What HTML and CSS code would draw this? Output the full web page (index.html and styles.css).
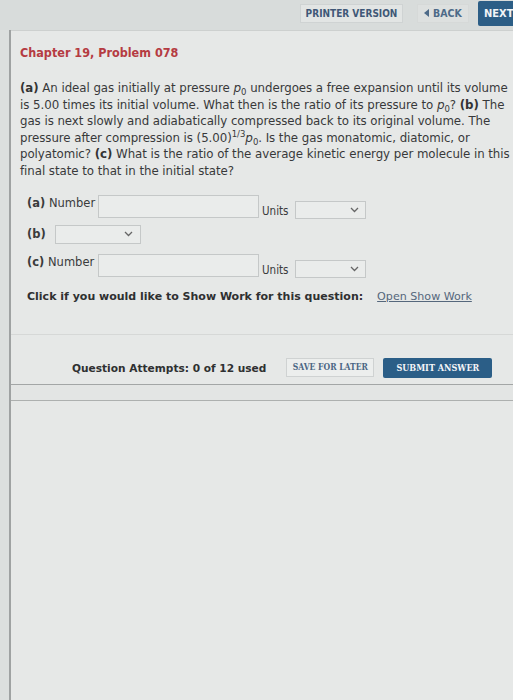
FILE: index.html
```html
<!DOCTYPE html>
<html lang="en">
<head>
<meta charset="utf-8">
<title>Chapter 19, Problem 078</title>
<link rel="stylesheet" href="styles.css">
</head>
<body>
<div class="topbar">
  <span class="btn btn-print">PRINTER VERSION</span>
  <span class="btn btn-back"><svg class="tri" viewBox="0 0 5 8" width="5" height="8"><path d="M5 0 L0 4 L5 8 Z" fill="#4d6a88"/></svg>BACK</span>
  <span class="btn btn-next">NEXT</span>
</div>
<div class="page">
  <div class="panel">
    <h1 class="title">Chapter 19, Problem 078</h1>
    <p class="question"><b>(a)</b> An ideal gas initially at pressure <i>p</i><sub>0</sub> undergoes a free expansion until its volume<br>is 5.00 times its initial volume. What then is the ratio of its pressure to <i>p</i><sub>0</sub>? <b>(b)</b> The<br>gas is next slowly and adiabatically compressed back to its original volume. The<br>pressure after compression is (5.00)<sup>1/3</sup><i>p</i><sub>0</sub>. Is the gas monatomic, diatomic, or<br>polyatomic? <b>(c)</b> What is the ratio of the average kinetic energy per molecule in this<br>final state to that in the initial state?</p>
    <div class="form">
      <div class="row">
        <span class="label"><b>(a)</b> Number</span>
        <span class="input"></span>
        <span class="units">Units</span>
        <span class="select"><svg viewBox="0 0 9 6" width="9" height="6"><path d="M1 1 L4.5 4.5 L8 1" fill="none" stroke="#666" stroke-width="1.3"/></svg></span>
      </div>
      <div class="row row-b">
        <span class="label"><b>(b)</b></span>
        <span class="select select-b"><svg viewBox="0 0 9 6" width="9" height="6"><path d="M1 1 L4.5 4.5 L8 1" fill="none" stroke="#666" stroke-width="1.3"/></svg></span>
      </div>
      <div class="row">
        <span class="label"><b>(c)</b> Number</span>
        <span class="input"></span>
        <span class="units">Units</span>
        <span class="select"><svg viewBox="0 0 9 6" width="9" height="6"><path d="M1 1 L4.5 4.5 L8 1" fill="none" stroke="#666" stroke-width="1.3"/></svg></span>
      </div>
    </div>
    <div class="showwork">
      <span class="sw-label">Click if you would like to Show Work for this question:</span>
      <a class="sw-link" href="#">Open Show Work</a>
    </div>
  </div>
  <div class="footer">
    <span class="attempts">Question Attempts: 0 of 12 used</span>
    <span class="btn-save">SAVE FOR LATER</span>
    <span class="btn-submit">SUBMIT ANSWER</span>
  </div>
  <div class="gap-strip"></div>
  <div class="blank"></div>
</div>
</body>
</html>
```

FILE: styles.css
```css
html, body {
  margin: 0;
  padding: 0;
  height: 100%;
  overflow: hidden;
}
body {
  background: #dcdfde;
  font-family: "DejaVu Sans", sans-serif;
  color: #3a3b3c;
  display: flex;
  flex-direction: column;
}
.topbar {
  height: 30px;
  flex-shrink: 0;
  display: flex;
  align-items: center;
  padding-left: 300px;
  white-space: nowrap;
  overflow: hidden;
  background: #d8dcdb;
}
.btn {
  display: inline-flex;
  align-items: center;
  justify-content: center;
  box-sizing: border-box;
  flex-shrink: 0;
  font-family: "DejaVu Sans Condensed", "DejaVu Sans", sans-serif;
  font-weight: bold;
  font-size: 10px;
}
.btn-print {
  width: 103px;
  height: 19px;
  margin-top: -4px;
  background: #e2e5e4;
  border: 1px solid #cfd3d3;
  color: #3f5877;
}
.btn-back {
  width: 52px;
  height: 19px;
  margin-left: 14px;
  margin-top: -4px;
  background: #dde0df;
  border: 1px solid #d6d9d8;
  color: #4d6a88;
  gap: 4px;
  font-size: 10.5px;
}
.btn-next {
  width: 35px;
  height: 25px;
  margin-left: 9px;
  margin-top: -3px;
  background: #2c5e86;
  color: #f2f4f6;
  font-size: 11px;
  border-radius: 2px 0 0 2px;
  justify-content: flex-start;
  padding-left: 6px;
}
.page {
  flex: 1;
  min-height: 0;
  margin-left: 9px;
  border-left: 2px solid #9fa2a2;
  background: #e6e8e7;
  display: flex;
  flex-direction: column;
}
.panel {
  border-top: 1px solid #cdd0cf;
  padding: 13px 0 0 9px;
  height: 305px;
  flex-shrink: 0;
  box-sizing: border-box;
  border-bottom: 1px solid #d6d8d7;
}
.title {
  margin: 0;
  font-family: "DejaVu Sans Condensed", "DejaVu Sans", sans-serif;
  font-size: 12.5px;
  font-weight: bold;
  color: #b53b42;
  line-height: 18px;
}
.question {
  margin: 18px 0 0 0;
  font-size: 11.8px;
  line-height: 16.6px;
  white-space: nowrap;
  color: #38393a;
  letter-spacing: -0.05px;
}
.question b {
  font-weight: bold;
  color: #333;
}
.question i {
  font-size: 12px;
}
.question sub, .question sup {
  font-size: 8.5px;
  line-height: 0;
}
.form {
  margin-top: 15px;
  padding-left: 7px;
  display: flex;
  flex-direction: column;
}
.row {
  display: flex;
  align-items: flex-start;
  font-size: 11.5px;
  height: 29px;
}
.label {
  width: 71px;
  padding-top: 1px;
  white-space: nowrap;
}
.input {
  width: 161px;
  height: 23px;
  box-sizing: border-box;
  border: 1px solid #c5c8c8;
  background: #eaeceb;
  flex-shrink: 0;
}
.units {
  margin-left: 3px;
  margin-top: 9px;
  width: 33px;
  font-family: "DejaVu Sans Condensed", "DejaVu Sans", sans-serif;
}
.select {
  width: 71px;
  height: 18px;
  margin-top: 6px;
  box-sizing: border-box;
  border: 1px solid #c5c8c8;
  background: #eaeceb;
  display: flex;
  align-items: center;
  justify-content: flex-end;
  padding-right: 6px;
}
.row-b {
  height: 30px;
}
.row-b .label {
  width: 28px;
  padding-top: 3px;
}
.row-b .select {
  width: 86px;
  margin-top: 1px;
  height: 19px;
  padding-right: 7px;
}
.showwork {
  margin-top: 7px;
  padding-left: 7px;
  display: flex;
  align-items: baseline;
  font-size: 11px;
}
.sw-label {
  font-weight: bold;
  color: #2f3031;
}
.sw-link {
  margin-left: 14px;
  color: #55677c;
  text-decoration: underline;
  font-size: 11.1px;
}
.footer {
  height: 50px;
  flex-shrink: 0;
  box-sizing: border-box;
  display: flex;
  align-items: center;
  padding-left: 61px;
  padding-top: 17px;
  border-bottom: 1px solid #a3a6a6;
}
.attempts {
  font-weight: bold;
  font-size: 10.6px;
  color: #2f3031;
}
.btn-save {
  margin-left: 20px;
  width: 88px;
  height: 19px;
  box-sizing: border-box;
  border: 1px solid #cfd2d2;
  background: #eceeed;
  color: #4b6684;
  font-family: "DejaVu Serif Condensed", "DejaVu Serif", serif;
  font-weight: bold;
  font-size: 8.5px;
  display: flex;
  align-items: center;
  justify-content: center;
  margin-top: -2px;
}
.btn-submit {
  margin-left: 9px;
  width: 109px;
  height: 20px;
  background: #2b5e87;
  color: #f3f5f7;
  font-family: "DejaVu Serif Condensed", "DejaVu Serif", serif;
  font-weight: bold;
  font-size: 9px;
  display: flex;
  align-items: center;
  justify-content: center;
  border-radius: 2px;
}
.gap-strip {
  height: 15px;
  flex-shrink: 0;
  border-bottom: 1px solid #adb0af;
  background: #e3e5e4;
}
.blank {
  flex: 1;
  background: #e6e8e7;
}
```
